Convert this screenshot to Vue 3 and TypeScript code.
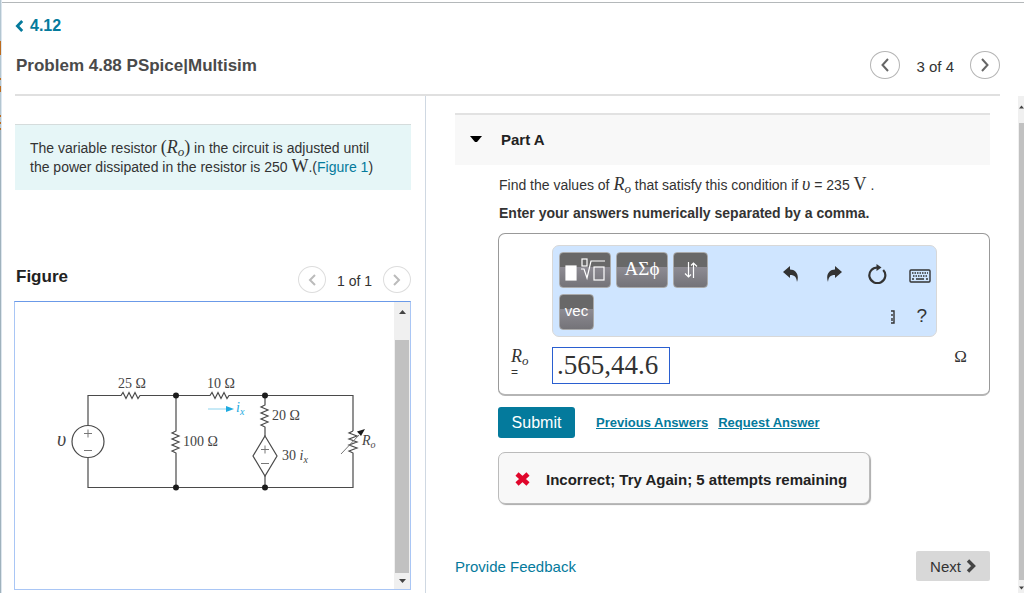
<script setup lang="ts">
import { ref } from 'vue'

const answer = ref<string>('.565,44.6')
const open = ref<boolean>(true)
</script>

<template>
  <div class="page">
    <div class="edge" aria-hidden="true"></div>
    <div class="main">
      <header class="header">
        <a class="crumb" href="#assignment">
          <svg width="9" height="12" viewBox="0 0 9 12" aria-hidden="true">
            <path d="M7.2 1 L2.4 6 L7.2 11" fill="none" stroke="currentColor" stroke-width="2.8" />
          </svg>
          <span>4.12</span>
        </a>
        <div class="title-row">
          <h1>Problem 4.88 PSpice|Multisim</h1>
          <nav class="pager" aria-label="Problems">
            <button class="round" type="button" aria-label="Previous problem">
              <svg width="10" height="16" viewBox="0 0 10 16"><path d="M8 2 L2.5 8 L8 14" /></svg>
            </button>
            <span>3 of 4</span>
            <button class="round" type="button" aria-label="Next problem">
              <svg width="10" height="16" viewBox="0 0 10 16"><path d="M2 2 L7.5 8 L2 14" /></svg>
            </button>
          </nav>
        </div>
      </header>

      <div class="columns">
        <section class="left">
          <p class="intro">
            The variable resistor <span class="math">(<i>R</i><i class="sub">o</i>)</span> in the circuit is adjusted until
            the power dissipated in the resistor is 250 <span class="math">W</span>.(<a href="#figure">Figure 1</a>)
          </p>
          <div class="figure-head">
            <h2>Figure</h2>
            <nav class="pager small" aria-label="Figures">
              <button class="round" type="button" aria-label="Previous figure">
                <svg width="10" height="16" viewBox="0 0 10 16"><path d="M8 3 L3 8 L8 13" /></svg>
              </button>
              <span>1 of 1</span>
              <button class="round" type="button" aria-label="Next figure">
                <svg width="10" height="16" viewBox="0 0 10 16"><path d="M2 3 L7 8 L2 13" /></svg>
              </button>
            </nav>
          </div>
          <div id="figure" class="figure">
            <svg class="circuit" viewBox="0 0 379 286" role="img" aria-label="Circuit diagram">
              <g class="wire">
                <path d="M73 124 V93.500 H106 l2 -3 3 6 3 -6 3 6 3 -6 3 6 2 -3 H195 l2 -3 3 6 3 -6 3 6 3 -6 3 6 2 -3 H338 V129" />
                <path d="M338 129 l-4 2 8 3 -8 3 8 3 -8 3 8 3 -8 3 4 2 V185.500 H73 V156" />
                <path d="M161 94 V129 l-4 2 7 3 -7 3 7 3 -7 3 7 3 -7 3 4 2 V185" />
                <path d="M250 94 V103 l-4 2 7 3 -7 3 7 3 -7 3 7 3 -7 3 4 2 V134 M250 174 V185" />
                <path d="M250 134 L262 154 L250 174 L238 154 Z" />
                <circle cx="73" cy="139.500" r="16" />
              </g>
              <g class="sign">
                <path d="M69 131.500 h8 M73 127.500 v8 M69 148.500 h8" />
                <path d="M246 147.500 h8 M250 143.500 v8 M246 161.500 h8" />
                <path d="M326 152 L344 133" />
              </g>
              <g class="dot">
                <circle cx="161" cy="93.500" r="3" />
                <circle cx="250" cy="93.500" r="3" />
                <circle cx="161" cy="185.500" r="3" />
                <circle cx="250" cy="185.500" r="3" />
                <path d="M350 127 L342 129.500 L346 134 Z" />
              </g>
              <path class="flow-line" d="M193 107 H212" />
              <path class="flow-head" d="M211 104 L219 107 L211 110 Z" />
              <g class="label">
                <text x="103" y="86">25 Ω</text>
                <text x="192" y="86">10 Ω</text>
                <text x="168" y="144">100 Ω</text>
                <text x="257" y="118">20 Ω</text>
                <text x="267" y="158">30 <tspan class="it">i</tspan><tspan class="it low" dy="3">x</tspan></text>
                <text x="347" y="143" class="it">R<tspan class="low" dy="3">o</tspan></text>
                <text x="42" y="144" class="it source">υ</text>
                <text x="221" y="110" class="it flow">i<tspan class="low" dy="3">x</tspan></text>
              </g>
            </svg>
            <div class="bar inner" aria-hidden="true">
              <svg width="7" height="4" viewBox="0 0 7 4"><path d="M0 4 L3.500 0 L7 4 Z" /></svg>
              <span class="thumb"></span>
              <svg width="7" height="4" viewBox="0 0 7 4"><path d="M0 0 L3.500 4 L7 0 Z" /></svg>
            </div>
          </div>
        </section>

        <section class="right">
          <button class="part" type="button" :aria-expanded="open" @click="open = !open">
            <svg width="12" height="7" viewBox="0 0 12 7" aria-hidden="true"><path d="M0 0 H12 L7 6 H5 Z" /></svg>
            <span>Part A</span>
          </button>
          <div v-show="open" class="work">
            <p class="ask">
              Find the values of <span class="math"><i>R</i><i class="sub">o</i></span> that satisfy this condition if
              <i class="math">υ</i> = 235 <span class="math">V</span> .
            </p>
            <p class="hint">Enter your answers numerically separated by a comma.</p>

            <div class="answer">
              <div class="toolbar" role="toolbar" aria-label="Equation tools">
                <div class="keys">
                  <button class="key wide" type="button" aria-label="Templates">
                    <svg width="42" height="26" viewBox="0 0 42 26">
                      <rect x="2" y="9" width="10" height="14" fill="#fff" />
                      <rect x="18" y="2" width="5" height="7" />
                      <rect x="30" y="10" width="10" height="13" />
                      <path d="M17 12 H20 L23 21 L27 4 H41" />
                    </svg>
                  </button>
                  <button class="key wide greek" type="button">ΑΣϕ</button>
                  <button class="key" type="button" aria-label="Subscripts and superscripts">
                    <svg width="14" height="18" viewBox="0 0 14 18">
                      <path d="M4.500 1 V16 M1 12.500 L4.500 16 L7 13.500 M9.500 17 V2 M7 4.500 L9.500 2 L13 5.500" />
                    </svg>
                  </button>
                  <button class="key vec" type="button">vec</button>
                </div>
                <div class="actions">
                  <button class="tool" type="button" aria-label="Undo">
                    <svg width="16" height="17" viewBox="0 0 16 17"><path d="M0 6 L7 0 V3.500 C13 3.500 16.500 9 14 16 C13.500 11.500 12 9 7 9 V12 Z" /></svg>
                  </button>
                  <button class="tool" type="button" aria-label="Redo">
                    <svg width="16" height="17" viewBox="0 0 16 17"><path d="M16 6 L9 0 V3.500 C3 3.500 -0.500 9 2 16 C2.500 11.500 4 9 9 9 V12 Z" /></svg>
                  </button>
                  <button class="tool" type="button" aria-label="Reset">
                    <svg width="20" height="20" viewBox="0 0 20 20">
                      <path d="M16.200 6 A8 7.800 0 1 1 10.500 3.500" fill="none" stroke="#333" stroke-width="2.200" />
                      <path d="M9.500 0 L14.500 3.500 L9.500 7 Z" />
                    </svg>
                  </button>
                  <button class="tool keyboard" type="button" aria-label="Keyboard shortcuts">
                    <svg width="22" height="14" viewBox="0 0 22 14">
                      <rect x="1" y="1" width="20" height="12" rx="1" fill="none" stroke="#333" stroke-width="1.400" />
                      <path d="M3 4 H19 M4 7 H19" stroke="#333" stroke-width="1.400" stroke-dasharray="1.500 1" />
                      <path d="M3 10 H5 M7 10 H15 M17 10 H19" stroke="#333" stroke-width="1.600" />
                    </svg>
                  </button>
                  <span class="clip" aria-hidden="true">
                    <svg width="4" height="14" viewBox="0 0 4 14"><path d="M0 1 H3 V13 H0 M1 4 V6 M1 8 V11" fill="none" stroke="#333" stroke-width="1.400" /></svg>
                  </span>
                  <button class="tool help" type="button">?</button>
                </div>
              </div>
              <label class="name" for="answer"><span class="math"><i>R</i><i class="sub">o</i></span><span class="equals">=</span></label>
              <input id="answer" v-model="answer" class="value" type="text" />
              <span class="unit">Ω</span>
            </div>

            <div class="submit-row">
              <button class="submit" type="button">Submit</button>
              <a href="#previous">Previous Answers</a>
              <a href="#request">Request Answer</a>
            </div>

            <div class="feedback" role="status">
              <svg width="15" height="14" viewBox="0 0 15 14" aria-hidden="true">
                <path d="M2 2 L13 12 M13 2 L2 12" stroke="#e0062b" stroke-width="4.600" />
              </svg>
              <span>Incorrect; Try Again; 5 attempts remaining</span>
            </div>
          </div>

          <footer class="foot">
            <a href="#feedback">Provide Feedback</a>
            <button class="next" type="button">
              Next
              <svg width="10" height="14" viewBox="0 0 10 14" aria-hidden="true"><path d="M2 1.500 L7.500 7 L2 12.500" fill="none" stroke="#444" stroke-width="3.400" /></svg>
            </button>
          </footer>
        </section>

        <div class="bar outer" aria-hidden="true">
          <svg width="7" height="4" viewBox="0 0 7 4"><path d="M0 4 L3.500 0 L7 4 Z" /></svg>
          <span class="thumb"></span>
          <svg width="7" height="4" viewBox="0 0 7 4"><path d="M0 0 L3.500 4 L7 0 Z" /></svg>
        </div>
      </div>
    </div>
  </div>
</template>

<style>
body {
  margin: 0;
  background: #fff;
}
</style>

<style scoped>
* {
  box-sizing: border-box;
}
.page {
  display: flex;
  min-height: 100vh;
  font-family: "Liberation Sans", Arial, sans-serif;
  font-size: 14px;
  color: #333;
}
h1,
h2,
p {
  margin: 0;
}
button {
  font: inherit;
  color: inherit;
  padding: 0;
  border: 0;
  background: none;
  cursor: pointer;
}
a {
  color: #047a9c;
  text-decoration: none;
}
.edge {
  flex: none;
  width: 2px;
  border-right: 1px solid #dde6ee;
  background: linear-gradient(
    #b3c6d1 41px, #bd6b1e 41px 55px, #b3c6d1 55px 78px, #bd6b1e 78px 80px, #b3c6d1 80px 86px,
    #bd6b1e 86px 92px, #b3c6d1 92px 115px, #bd6b1e 115px 117px, #b3c6d1 117px 122px,
    #bd6b1e 122px 124px, #b3c6d1 124px 128px, #bd6b1e 128px 130px, #9fb2bd 130px
  );
}
.main {
  flex: 1;
  min-width: 0;
  display: flex;
  flex-direction: column;
  margin-top: 2px;
  border-top: 1px solid #b4b8ba;
}
.header {
  margin: 0 24px 0 13px;
  padding-top: 13px;
  border-bottom: 2px solid #e0e0e0;
}
.crumb {
  display: flex;
  align-items: center;
  gap: 6px;
  height: 20px;
  font-size: 16px;
  font-weight: bold;
}
.title-row {
  display: flex;
  justify-content: space-between;
  align-items: center;
  height: 58px;
}
h1,
h2 {
  font-size: 17px;
  line-height: 20px;
}
h1 {
  padding: 2px 0 0 1px;
  color: #4a4a4a;
}
h2 {
  color: #222;
}
.pager {
  display: flex;
  align-items: center;
  gap: 16px;
  font-size: 15px;
}
.pager span {
  padding-top: 3px;
}
.round {
  display: flex;
  align-items: center;
  justify-content: center;
  width: 30px;
  height: 28px;
  border: 1px solid #b5b5b5;
  border-radius: 50%;
}
.round path {
  fill: none;
  stroke: #666;
  stroke-width: 2;
}
.small {
  gap: 11px;
  font-size: 14px;
}
.small .round {
  width: 28px;
  height: 27px;
  border-color: #ddd;
}
.small .round path {
  stroke: #bbb;
}
.columns {
  flex: 1;
  display: flex;
}
.left {
  flex: 0 0 424px;
  min-width: 0;
  display: flex;
  flex-direction: column;
  padding: 28px 14px 3px 12px;
  border-right: 1px solid #cfd8e2;
}
.intro {
  margin-left: 1px;
  padding: 14px 30px 12px 15px;
  min-height: 66px;
  border-top: 1px solid #d5dcdc;
  background: #e6f6f7;
  line-height: 19px;
}
.math {
  font-family: "Liberation Serif", serif;
  font-size: 18px;
  line-height: 0;
}
.sub {
  font-size: 13px;
  line-height: 0;
  position: relative;
  top: 3px;
}
.figure-head {
  display: flex;
  justify-content: space-between;
  align-items: center;
  margin-top: 76px;
  padding-left: 2px;
  height: 27px;
}
.figure-head h2 {
  padding-bottom: 6px;
}
.figure {
  flex: 1;
  display: flex;
  justify-content: space-between;
  margin-top: 8px;
  border: 1px solid #a9c6f5;
  border-top-color: #6b9ae8;
}
.circuit {
  flex: none;
  width: 379px;
  height: 286px;
}
.wire {
  fill: none;
  stroke: #4a4a4a;
  stroke-width: 1.2;
}
.sign {
  fill: none;
  stroke: #777;
  stroke-width: 1;
}
.dot {
  fill: #1c1c1c;
}
.flow-line {
  stroke: #8fd4ee;
}
.flow-head {
  fill: #1eaae0;
}
.label {
  font-family: "Liberation Serif", serif;
  font-size: 14px;
  fill: #444;
}
.it {
  font-style: italic;
}
.low {
  font-size: 10px;
}
.source {
  font-size: 20px;
}
.flow {
  fill: #1eaae0;
}
.bar {
  display: flex;
  flex-direction: column;
  align-items: center;
  flex: none;
  background: #f0f0f0;
}
.bar path {
  fill: #444;
}
.bar svg {
  flex: none;
}
.thumb {
  flex: 1;
  width: 100%;
  background: #c1c1c1;
}
.inner {
  width: 16px;
  padding: 8px 1px 6px;
}
.inner .thumb {
  margin: 26px 0 6px;
}
.outer {
  width: 6px;
  padding: 9px 0 3px;
}
.outer svg {
  width: 5px;
}
.outer .thumb {
  width: 5px;
  margin: 14px 0 6px 1px;
}
.right {
  flex: 1;
  min-width: 0;
  display: flex;
  flex-direction: column;
  padding: 17px 28px 12px 29px;
}
.part {
  display: flex;
  align-items: center;
  gap: 19px;
  height: 52px;
  padding: 0 15px 2px;
  border-top: 2px solid #e2e2e2;
  background: #f8f8f8;
  font-size: 15px;
  font-weight: bold;
  color: #222;
}
.work {
  margin-left: 43px;
}
.ask,
.hint {
  padding-left: 1px;
  line-height: 20px;
}
.ask {
  margin-top: 10px;
}
.hint {
  margin-top: 8px;
  font-weight: bold;
}
.answer {
  display: grid;
  grid-template-columns: 41px 385px 1fr;
  row-gap: 10px;
  margin-top: 10px;
  padding: 11px 12px 10px 12px;
  border: 1px solid #999;
  border-bottom: 2px solid #b5b5b5;
  border-radius: 7px;
}
.toolbar {
  grid-column: 2;
  display: flex;
  justify-content: space-between;
  height: 92px;
  padding: 6px 5px 0 6px;
  border: 1px solid #d8d8d8;
  border-radius: 7px;
  background: #cfe5ff;
}
.keys {
  display: flex;
  flex-wrap: wrap;
  align-content: flex-start;
  gap: 6px 5px;
  width: 170px;
}
.key {
  display: flex;
  align-items: center;
  justify-content: center;
  width: 35px;
  height: 36px;
  border: 1px solid #aaa;
  border-radius: 4px;
  background: linear-gradient(#686868 40%, #8e8c94 40%, #747378);
  color: #fff;
}
.key.wide {
  width: 52px;
}
.key svg {
  fill: none;
  stroke: #fff;
  stroke-width: 1.2;
}
.greek {
  padding-bottom: 3px;
  font-family: "Liberation Serif", serif;
  font-size: 19px;
}
.vec {
  padding-bottom: 4px;
  font-size: 15px;
}
.actions {
  display: grid;
  grid-template-columns: 43px 43px 43px 33px;
  grid-template-rows: 44px 40px;
  align-items: center;
  justify-items: center;
}
.tool {
  display: flex;
  align-items: center;
}
.tool svg {
  fill: #333;
}
.keyboard {
  justify-self: end;
  padding-top: 4px;
}
.clip {
  grid-column: 3;
  justify-self: end;
  padding: 4px 3px 0 0;
}
.help {
  grid-column: 4;
  justify-self: end;
  padding-right: 4px;
  font-size: 19px;
}
.name {
  grid-column: 1;
  display: flex;
  flex-direction: column;
}
.name .math {
  line-height: 18px;
}
.equals {
  font-size: 12px;
  line-height: 14px;
}
.value {
  width: 118px;
  height: 37px;
  padding: 0 4px;
  border: 1px solid #2a5fd0;
  font-family: "Liberation Serif", serif;
  font-size: 27px;
  color: #333;
  outline: none;
}
.unit {
  justify-self: end;
  padding-right: 10px;
  font-family: "Liberation Serif", serif;
  font-size: 17px;
}
.submit-row {
  display: flex;
  align-items: center;
  margin-top: 11px;
  font-size: 13px;
  font-weight: bold;
}
.submit-row a {
  margin-right: 10px;
  text-decoration: underline;
}
.submit {
  width: 77px;
  height: 31px;
  margin-right: 21px;
  border-radius: 3px;
  background: #047a9c;
  color: #fff;
  font-size: 16px;
  font-weight: normal;
}
.feedback {
  display: flex;
  align-items: center;
  gap: 16px;
  width: 372px;
  height: 52px;
  margin-top: 14px;
  padding: 2px 0 0 16px;
  border: 1px solid #bbb;
  border-radius: 7px;
  background: #f8f8f8;
  box-shadow: 1px 1px 1px #aaa;
  font-size: 15px;
  font-weight: bold;
  color: #222;
}
.foot {
  display: flex;
  justify-content: space-between;
  align-items: center;
  margin-top: auto;
  font-size: 15px;
}
.next {
  display: flex;
  align-items: center;
  justify-content: center;
  gap: 5px;
  width: 74px;
  height: 30px;
  border-radius: 2px;
  background: #d8d8d8;
}
</style>
